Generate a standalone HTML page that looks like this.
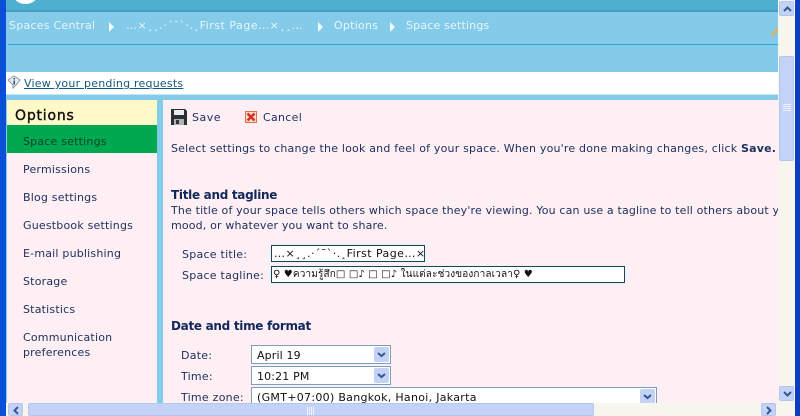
<!DOCTYPE html>
<html><head><meta charset="utf-8"><style>
html,body{margin:0;padding:0;width:800px;height:416px;overflow:hidden;background:#fff}
body{position:relative;font-family:"DejaVu Sans","Liberation Sans","Noto Sans CJK SC",sans-serif;font-size:11px;color:#1a2a55}
.a{position:absolute}
.t{position:absolute;white-space:nowrap;line-height:14px;margin-top:1px}
.w{color:#e6f6fc}
.n{color:#1c2f5c}
.sel{position:absolute;background:#fff;border:1px solid #7f9db9;box-sizing:border-box;height:19px;color:#111}
.sel span{position:absolute;left:5px;top:2px;line-height:15px;white-space:nowrap}
.dd{position:absolute;right:1px;top:1px;width:15px;height:15px;background:#c3d3f5;border-radius:2px}
.sb{position:absolute;background:#c3d3f8;border:1px solid #b4c6ec;box-sizing:border-box;border-radius:2px}
svg{position:absolute;overflow:visible}
</style></head><body>
<div class="a" style="left:0;top:0;width:6px;height:416px;background:#0a4fd8"></div>
<div class="a" style="left:6px;top:0;width:772px;height:10px;background:#4eafce"></div>
<div class="a" style="left:6px;top:10px;width:772px;height:2px;background:#3f9dbf"></div>
<div class="a" style="left:6px;top:12px;width:772px;height:60px;background:#84cbea"></div>
<div class="a" style="left:8px;top:44px;width:770px;height:1px;background:#2fa6dc"></div>
<div class="a" style="left:12px;top:-9px;width:27px;height:13px;background:#fff;border-radius:0 0 14px 14px"></div>
<div class="t w" style="left:9px;top:18px;letter-spacing:.25px">Spaces Central</div>
<svg style="left:109px;top:22px" width="6" height="10"><path d="M0 0L5 5L0 10Z" fill="#f2fbff"/></svg>
<div class="t w" style="left:126px;top:18px;letter-spacing:.53px">…×¸¸.·´¯`·.¸First Page…×¸¸…</div>
<svg style="left:318px;top:22px" width="6" height="10"><path d="M0 0L5 5L0 10Z" fill="#f2fbff"/></svg>
<div class="t w" style="left:334px;top:18px;letter-spacing:.25px">Options</div>
<svg style="left:390px;top:22px" width="6" height="10"><path d="M0 0L5 5L0 10Z" fill="#f2fbff"/></svg>
<div class="t w" style="left:406px;top:18px;letter-spacing:.18px">Space settings</div>
<svg style="left:771px;top:27px" width="7" height="10"><path d="M0 9L1 6L7 0V4L2 9Z" fill="#d9b35f"/></svg>
<div class="a" style="left:6px;top:72px;width:772px;height:22px;background:#fff"></div>
<div class="a" style="left:6px;top:94px;width:772px;height:322px;background:#84cbea"></div>
<div class="a" style="left:6px;top:94px;width:772px;height:1px;background:#c5e5f2"></div>
<svg style="left:7px;top:75px" width="14" height="14"><path d="M1 5L7 1L13 5L9 10L6 13V10Z" fill="#e9eef5" stroke="#8a97a8"/><rect x="6.5" y="3" width="1.5" height="1.5" fill="#2b4a7a"/><rect x="6.5" y="5.5" width="1.5" height="4" fill="#2b4a7a"/></svg>
<div class="t" style="left:24px;top:76px;color:#14587f;text-decoration:underline;letter-spacing:.22px">View your pending requests</div>
<div class="a" style="left:7px;top:100px;width:150px;height:316px;background:#fdeff3"></div>
<div class="a" style="left:7px;top:100px;width:150px;height:25px;background:#fff8c8"></div>
<div class="t" style="left:15px;top:108px;font-size:14px;font-weight:normal;color:#111;letter-spacing:.8px;-webkit-text-stroke:.4px #111">Options</div>
<div class="a" style="left:7px;top:125px;width:150px;height:28px;background:#00a94f"></div>
<div class="t" style="left:23px;top:134px;color:#10402c;letter-spacing:.2px">Space settings</div>
<div class="t n" style="left:23px;top:162px;letter-spacing:.2px">Permissions</div>
<div class="t n" style="left:23px;top:190px;letter-spacing:.2px">Blog settings</div>
<div class="t n" style="left:23px;top:218px;letter-spacing:.2px">Guestbook settings</div>
<div class="t n" style="left:23px;top:246px;letter-spacing:.2px">E-mail publishing</div>
<div class="t n" style="left:23px;top:274px;letter-spacing:.2px">Storage</div>
<div class="t n" style="left:23px;top:302px;letter-spacing:.2px">Statistics</div>
<div class="t n" style="left:23px;top:330px;letter-spacing:.2px">Communication</div>
<div class="t n" style="left:23px;top:345px;letter-spacing:.2px">preferences</div>
<div class="a" style="left:163px;top:100px;width:615px;height:316px;background:#fdeff3"></div>
<svg style="left:171px;top:109px" width="16" height="16"><path d="M0 0H14L16 2V16H0Z" fill="#2a2f33"/><rect x="3" y="1" width="10" height="5" fill="#e9ebee"/><rect x="3" y="10" width="10" height="6" fill="#aeb3b8"/><rect x="5" y="11" width="3" height="4" fill="#333"/></svg>
<div class="t n" style="left:192px;top:110px;letter-spacing:.5px">Save</div>
<svg style="left:245px;top:111px" width="12" height="12"><rect width="12" height="12" fill="#f4d8c8"/><rect x=".5" y=".5" width="11" height="11" fill="none" stroke="#e0704a"/><path d="M2.5 2.5L9.5 9.5M9.5 2.5L2.5 9.5" stroke="#d8301a" stroke-width="2.4"/></svg>
<div class="t n" style="left:263px;top:110px;letter-spacing:.3px">Cancel</div>
<div class="a" style="left:163px;top:100px;width:615px;height:303px;overflow:hidden">
<div class="t n" style="left:8px;top:41px;letter-spacing:.2px">Select settings to change the look and feel of your space. When you're done making changes, click <b>Save.</b></div>
<div class="t" style="left:8px;top:87px;font-size:12px;font-weight:bold;color:#12275a;letter-spacing:-.3px">Title and tagline</div>
<div class="t n" style="left:8px;top:103px;letter-spacing:.16px">The title of your space tells others which space they're viewing. You can use a tagline to tell others about your</div>
<div class="t n" style="left:8px;top:118px;letter-spacing:.16px">mood, or whatever you want to share.</div>
<div class="t n" style="left:19px;top:147px;letter-spacing:.25px">Space title:</div>
<div class="t n" style="left:19px;top:168px;letter-spacing:.25px">Space tagline:</div>
<div class="a" style="left:108px;top:145px;width:154px;height:17px;background:#fff;border:1px solid #0f4a5c;box-sizing:border-box;overflow:hidden"><span class="t" style="left:2px;top:0;color:#111;letter-spacing:.45px">…×¸¸.·´¯`·.¸First Page…×</span></div>
<div class="a" style="left:108px;top:166px;width:354px;height:17px;background:#fff;border:1px solid #0f4a5c;box-sizing:border-box;overflow:hidden"><span class="t" style="left:1px;top:0;color:#111;font-size:10px;letter-spacing:.14px;font-family:'DejaVu Sans','WenQuanYi Zen Hei',sans-serif">♀ ♥ความรู้สึก□ □♪ □ □♪ ในแต่ละช่วงของกาลเวลา♀ ♥</span></div>
<div class="t" style="left:8px;top:218px;font-size:12px;font-weight:bold;color:#12275a;letter-spacing:-.3px">Date and time format</div>
<div class="t n" style="left:18px;top:248px;letter-spacing:.25px">Date:</div>
<div class="t n" style="left:18px;top:269px;letter-spacing:.25px">Time:</div>
<div class="t n" style="left:18px;top:290px;letter-spacing:.25px">Time zone:</div>
<div class="sel" style="left:88px;top:245px;width:140px"><span style="letter-spacing:.15px">April 19</span><div class="dd"><svg style="left:3px;top:5px" width="9" height="6"><path d="M1 1L4.500 4L8 1" fill="none" stroke="#3a5590" stroke-width="2"/></svg></div></div>
<div class="sel" style="left:88px;top:266px;width:140px"><span style="letter-spacing:.15px">10:21 PM</span><div class="dd"><svg style="left:3px;top:5px" width="9" height="6"><path d="M1 1L4.500 4L8 1" fill="none" stroke="#3a5590" stroke-width="2"/></svg></div></div>
<div class="sel" style="left:88px;top:287px;width:406px"><span style="letter-spacing:.3px">(GMT+07:00) Bangkok, Hanoi, Jakarta</span><div class="dd"><svg style="left:3px;top:5px" width="9" height="6"><path d="M1 1L4.500 4L8 1" fill="none" stroke="#3a5590" stroke-width="2"/></svg></div></div>
</div>
<div class="a" style="left:778px;top:0;width:17px;height:416px;background:#f6f5ee"></div>
<div class="a" style="left:795px;top:0;width:5px;height:416px;background:#0a3fc4"></div>
<div class="sb" style="left:779px;top:1px;width:15px;height:15px"><svg style="left:3px;top:4px" width="9" height="6"><path d="M1 5L4.500 1.500L8 5" fill="none" stroke="#3a5590" stroke-width="2"/></svg></div>
<div class="sb" style="left:779px;top:56px;width:15px;height:105px"><svg style="left:3px;top:47px" width="8" height="8"><path d="M0 .5H8M0 2.500H8M0 4.500H8M0 6.500H8" stroke="#eef3ff"/></svg></div>
<div class="sb" style="left:779px;top:386px;width:15px;height:15px"><svg style="left:3px;top:4px" width="9" height="6"><path d="M1 1L4.500 4.500L8 1" fill="none" stroke="#3a5590" stroke-width="2"/></svg></div>
<div class="a" style="left:6px;top:403px;width:772px;height:13px;background:#f6f5ee"></div>
<div class="sb" style="left:8px;top:403px;width:15px;height:13px"><svg style="left:4px;top:2px" width="6" height="9"><path d="M5 1L1.500 4.500L5 8" fill="none" stroke="#3a5590" stroke-width="2"/></svg></div>
<div class="sb" style="left:28px;top:403px;width:566px;height:13px"><svg style="left:278px;top:3px" width="8" height="8"><path d="M.5 0V8M2.500 0V8M4.500 0V8M6.500 0V8" stroke="#eef3ff"/></svg></div>
<div class="sb" style="left:761px;top:403px;width:15px;height:13px"><svg style="left:4px;top:2px" width="6" height="9"><path d="M1 1L4.500 4.500L1 8" fill="none" stroke="#3a5590" stroke-width="2"/></svg></div>
</body></html>
